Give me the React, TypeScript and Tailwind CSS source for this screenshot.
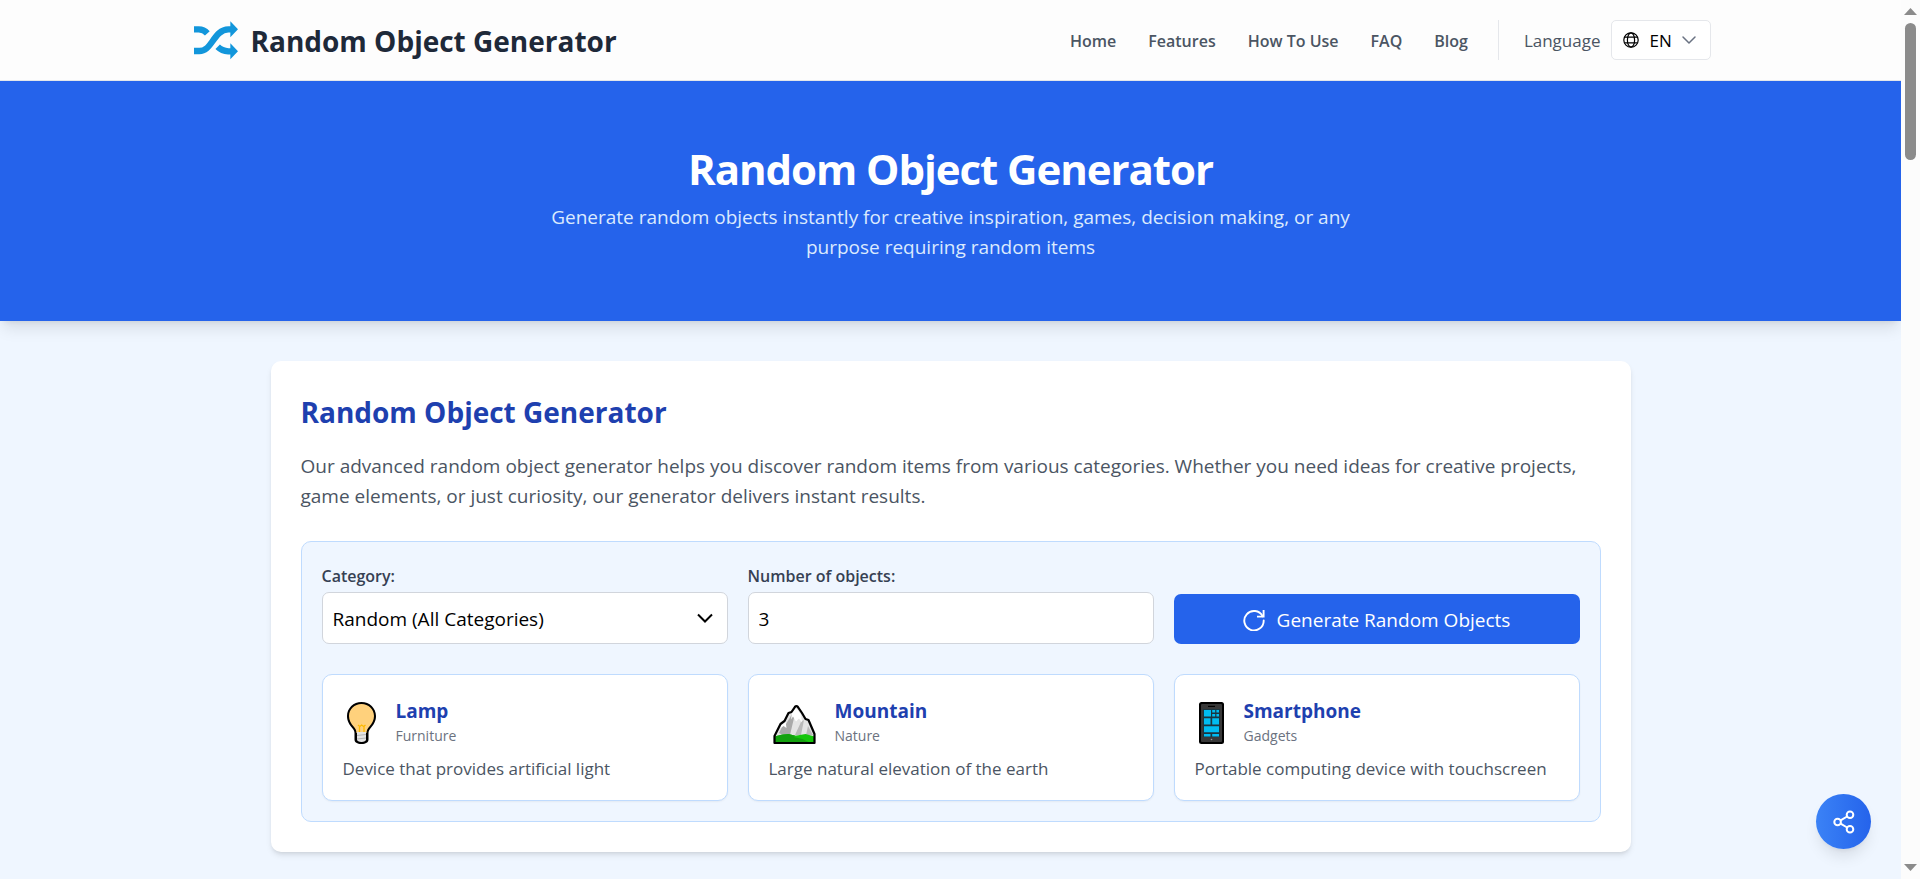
import React, { useState } from 'react';
import { ChevronDown } from 'lucide-react';

type IconName = 'lamp' | 'mountain' | 'phone';

interface RandomObject {
  name: string;
  category: string;
  description: string;
  icon: IconName;
}

const OBJECTS: RandomObject[] = [
  { name: 'Lamp', category: 'Furniture', description: 'Device that provides artificial light', icon: 'lamp' },
  { name: 'Mountain', category: 'Nature', description: 'Large natural elevation of the earth', icon: 'mountain' },
  { name: 'Smartphone', category: 'Gadgets', description: 'Portable computing device with touchscreen', icon: 'phone' },
];

const NAV_LINKS = [
  { label: 'Home', href: '#home' },
  { label: 'Features', href: '#features' },
  { label: 'How To Use', href: '#how-to-use' },
  { label: 'FAQ', href: '#faq' },
  { label: 'Blog', href: '#blog' },
];

function Logo() {
  return (
    <svg viewBox="42 62 132 117" className="w-11 h-[39px] shrink-0" aria-hidden="true">
      <g fill="none" stroke="#1296db" strokeWidth="19">
        <path d="M42 87h14c12 0 19 4 26 12" />
        <path d="M42 152h16c18 0 27-12 38-27 14-20 27-38 49-38h8" />
        <path d="M113 139c8 8 18 13 32 14h8" />
      </g>
      <path d="M151 63l23 24-23 24zM151 129l23 24-23 24z" fill="#1296db" />
    </svg>
  );
}

function GlobeIcon() {
  return (
    <svg viewBox="0 0 16 16" className="w-4 h-4" fill="none" stroke="#000" strokeWidth="1.2" aria-hidden="true">
      <circle cx="8" cy="8" r="7.2" />
      <ellipse cx="8" cy="8" rx="3.6" ry="7.2" />
      <path d="M1.6 5.2h12.8M1.6 10.8h12.8" />
    </svg>
  );
}

function RefreshIcon() {
  return (
    <svg viewBox="0 0 22 22" className="w-[22px] h-[22px]" fill="none" stroke="currentColor" strokeWidth="1.9" aria-hidden="true">
      <path d="M19.6 7.2A9.7 9.7 0 1 0 20.7 11.5" strokeLinecap="round" />
      <path d="M20.6 1v6.6h-6.6" />
    </svg>
  );
}

function ShareIcon() {
  return (
    <svg viewBox="0 0 22 24" className="w-[22px] h-6" fill="none" stroke="#fff" strokeWidth="2" aria-hidden="true">
      <circle cx="4.6" cy="12" r="3.3" />
      <circle cx="17" cy="4.7" r="3.3" />
      <circle cx="17" cy="19.3" r="3.3" />
      <path d="M7.6 10.4l6.5-3.9M7.6 13.6l6.5 3.9" />
    </svg>
  );
}

function LampIcon() {
  return (
    <svg viewBox="0 0 38 50" className="w-[38px] h-[50px]" aria-hidden="true">
      <path
        d="M18.5 7C10.5 7 4 13.2 4 21c0 5.5 2.5 8.8 5.2 12 1.5 1.8 2.3 3.2 2.3 5v6.500c0 2.800 2.700 4.500 7 4.500s7-1.700 7-4.500V38c0-1.800.8-3.200 2.300-5C30.500 29.800 33 26.500 33 21 33 13.200 26.500 7 18.500 7z"
        fill="#000"
      />
      <path d="M18.5 9C11.6 9 6 14.3 6 21c0 4.500 2 7.400 4.600 10.400 1.800 2.200 2.900 3.800 2.900 6.600h10c0-2.800 1.100-4.400 2.900-6.600C29 28.400 31 25.500 31 21 31 14.300 25.400 9 18.500 9z" fill="#ffd17c" />
      <path d="M16.500 37v-6M21 37v-6M15 30l1.800 1.500 1.900-1.500 1.900 1.500 1.900-1.500" stroke="#fdb900" strokeWidth="1.3" fill="none" />
      <path d="M14 37h9v7.500c0 1.500-1.800 2.500-4.500 2.500S14 46 14 44.500z" fill="#e4e4e4" />
      <path d="M14 40.500l9-1M14 44l9-1" stroke="#b3b3b3" strokeWidth="1.1" />
    </svg>
  );
}

function MountainIcon() {
  return (
    <svg viewBox="0 0 51 50" className="w-[51px] h-[50px]" aria-hidden="true">
      <path d="M5.500 48V41l6-12 4-3 4-8 3-1 3.500-5.200c.8-1 2-1 2.800 0L33 18l3.500 6 3 1L45.500 38V48z" fill="#e4e4e4" />
      <path d="M22.500 20l3.500-6 2-1-3 10-4 17h-7l-4-2 3-6 4-3z" fill="#a9a9a9" />
      <path d="M32 27l3-2-3 15h-6zM39 31l5 9h-7z" fill="#b9b9b9" />
      <path d="M27 12.500l5 7 1 8-3-4-3 3-3-5-2 3 1-7zM12.500 29l4-3 1 7-3-2-3 2z" fill="#fff" />
      <path d="M5.500 41.500l7-1.800 7-.7 7 1.700 10-1.700 9 2.500V48h-40z" fill="#16c60c" />
      <path d="M5.500 41.500l7-1.800 7-.7 7 1.700-2 1.300 9 2 8 4h-36z" fill="#13a10e" />
      <path
        d="M5.500 48V41l6-12 4-3 4-8 3-1 3.500-5.200c.8-1 2-1 2.800 0L33 18l3.500 6 3 1 6 14V48z"
        fill="none"
        stroke="#000"
        strokeWidth="2.2"
        strokeLinejoin="round"
      />
    </svg>
  );
}

function PhoneIcon() {
  return (
    <svg viewBox="0 0 34 50" className="w-[34px] h-[50px]" aria-hidden="true">
      <rect x="4" y="7" width="25" height="42" rx="2.5" fill="#000" />
      <rect x="6" y="9" width="21" height="38" rx="1" fill="#383838" />
      <path d="M13 11.4h7" stroke="#000" strokeWidth="1.2" />
      <rect x="8" y="14" width="17" height="28" fill="#1b3540" />
      <g fill="#00bcf2">
        <path d="M9 15h7v6.500H9zM17.200 15h3v2.600h-3zM21.400 15H24v2.600h-2.600zM17.200 18.900h3v2.600h-3zM21.400 18.900H24v2.600h-2.600z" />
        <path d="M9 23.200h6.500v6.300H9zM17.200 23.200H24v6.300h-6.800zM9 31.200h15v6H9zM9 38.900h6.500v2.600H9zM17.200 38.900H24v2.600h-6.800z" />
      </g>
      <circle cx="16.5" cy="44.5" r="0.8" fill="#999" />
    </svg>
  );
}

const ICONS: Record<IconName, React.ReactNode> = {
  lamp: <LampIcon />,
  mountain: <MountainIcon />,
  phone: <PhoneIcon />,
};

function Header() {
  return (
    <header className="bg-[#fdfdfd] border-b border-gray-200">
      <div className="max-w-[1520px] h-20 mx-auto flex items-center justify-between">
        <a href="#home" className="flex items-center gap-[13px] pl-[3px]">
          <Logo />
          <span className="pt-0.5 text-[28px] leading-10 font-bold text-gray-800 whitespace-nowrap">Random Object Generator</span>
        </a>
        <div className="flex items-center">
          <nav className="flex items-center gap-8 pt-0.5">
            {NAV_LINKS.map((link) => (
              <a key={link.label} href={link.href} className="text-[16px] font-semibold text-[#4b5563] whitespace-nowrap hover:text-blue-600">
                {link.label}
              </a>
            ))}
          </nav>
          <div className="ml-[30px] pl-[25px] h-10 flex items-center gap-[10px] border-l border-gray-200">
            <label htmlFor="language" className="pt-0.5 text-[17px] text-[#4b5563]">Language</label>
            <div className="relative">
              <select
                id="language"
                className="appearance-none w-[100px] h-10 pl-[38px] pt-0.5 bg-white border border-gray-200 rounded-[5px] text-[17px] text-black"
              >
                <option>EN</option>
              </select>
              <span className="absolute left-3 top-3 pointer-events-none"><GlobeIcon /></span>
              <ChevronDown className="absolute right-[10px] top-2 w-6 h-6 text-gray-500 pointer-events-none" strokeWidth={1.5} />
            </div>
          </div>
        </div>
      </div>
    </header>
  );
}

function Hero() {
  return (
    <section className="relative h-60 bg-[#2563eb] text-center shadow-lg pt-[63px]">
      <h1 className="text-[42px] leading-[50px] font-bold tracking-tight text-white">Random Object Generator</h1>
      <p className="max-w-[840px] mx-auto mt-2 text-[19px] leading-[30px] text-blue-100">
        Generate random objects instantly for creative inspiration, games, decision making, or any purpose requiring random items
      </p>
    </section>
  );
}

function ObjectCard({ item }: { item: RandomObject }) {
  return (
    <div className="bg-white border border-[#bfdbfe] rounded-[10px] p-5 shadow-xs">
      <div className="flex items-center gap-[15px]">
        {ICONS[item.icon]}
        <div>
          <h3 className="text-[19px] leading-8 font-bold text-[#1e40af]">{item.name}</h3>
          <p className="text-[14px] leading-[18px] text-[#6b7280]">{item.category}</p>
        </div>
      </div>
      <p className="mt-3 text-[17px] leading-[23px] text-[#4b5563]">{item.description}</p>
    </div>
  );
}

function Generator() {
  const [category, setCategory] = useState('all');
  const [count, setCount] = useState('3');
  const [results, setResults] = useState(OBJECTS);

  const generate = () => {
    const pool = OBJECTS.filter((o) => category === 'all' || o.category === category);
    const shuffled = [...pool].sort(() => Math.random() - 0.5);
    setResults(shuffled.slice(0, Number(count) || 1));
  };

  return (
    <section className="bg-white rounded-[10px] shadow-md p-[30px]">
      <h2 className="text-[28px] leading-[42px] font-bold text-[#1e40af]">Random Object Generator</h2>
      <p className="mt-[18px] text-[19px] leading-[30px] text-[#4b5563]">
        Our advanced random object generator helps you discover random items from various categories. Whether you need ideas for creative projects, game elements, or just curiosity, our generator delivers instant results.
      </p>

      <div className="mt-[30px] bg-[#eff6ff] border border-[#bfdbfe] rounded-[10px] p-5">
        <div className="grid grid-cols-3 gap-5 items-end">
          <div>
            <label htmlFor="category" className="block mb-0.5 text-[16px] leading-7 font-semibold text-gray-700">Category:</label>
            <div className="relative">
              <select
                id="category"
                value={category}
                onChange={(e) => setCategory(e.target.value)}
                className="appearance-none block w-full h-[52px] px-[10px] pt-0.5 bg-white border border-gray-300 rounded-[7px] text-[19px] text-black"
              >
                <option value="all">Random (All Categories)</option>
                <option value="Furniture">Furniture</option>
                <option value="Nature">Nature</option>
                <option value="Gadgets">Gadgets</option>
              </select>
              <svg viewBox="0 0 16 10" className="absolute right-[15px] top-[21px] w-4 h-[10px] pointer-events-none" fill="none" stroke="#000" strokeWidth="2" aria-hidden="true">
                <path d="M1 1.500l7 7 7-7" />
              </svg>
            </div>
          </div>
          <div>
            <label htmlFor="count" className="block mb-0.5 text-[16px] leading-7 font-semibold text-gray-700">Number of objects:</label>
            <input
              id="count"
              type="number"
              min={1}
              max={20}
              value={count}
              onChange={(e) => setCount(e.target.value)}
              className="block w-full h-[52px] px-[10px] pt-0.5 bg-white border border-gray-300 rounded-[7px] text-[19px] text-black"
            />
          </div>
          <button
            type="button"
            onClick={generate}
            className="h-[50px] pt-0.5 flex items-center justify-center gap-3 bg-[#2563eb] hover:bg-blue-700 rounded-[7px] text-[19px] text-white cursor-pointer"
          >
            <RefreshIcon />
            Generate Random Objects
          </button>
        </div>

        <div className="mt-[30px] grid grid-cols-3 gap-5">
          {results.map((item) => (
            <ObjectCard key={item.name} item={item} />
          ))}
        </div>
      </div>
    </section>
  );
}

function Scrollbar() {
  return (
    <div className="sticky top-0 h-screen w-[19px] shrink-0 flex flex-col items-center bg-[#fcfcfc] pt-2 pb-2" aria-hidden="true">
      <svg viewBox="0 0 13 7" className="w-[13px] h-[7px]"><path d="M6.500 0L13 7H0z" fill="#8b8b8b" /></svg>
      <div className="mt-2 w-[11px] h-[137px] rounded-full bg-[#8b8b8b]" />
      <svg viewBox="0 0 13 7" className="mt-auto w-[13px] h-[7px]"><path d="M6.500 7L13 0H0z" fill="#8b8b8b" /></svg>
    </div>
  );
}

export default function App() {
  return (
    <div className="flex min-h-screen bg-[#eff6ff] font-['Open_Sans','Noto_Sans',sans-serif]">
      <div className="flex-1 min-w-0">
        <Header />
        <Hero />
        <main className="max-w-[1360px] mx-auto pt-10">
          <Generator />
        </main>
      </div>
      <Scrollbar />

      {/* Floating share button */}
      <button
        type="button"
        aria-label="Share"
        className="fixed right-[49px] bottom-[30px] w-[55px] h-[55px] rounded-full flex items-center justify-center bg-linear-to-r from-[#3b82f6] to-[#2563eb] shadow-lg cursor-pointer"
      >
        <ShareIcon />
      </button>
    </div>
  );
}
